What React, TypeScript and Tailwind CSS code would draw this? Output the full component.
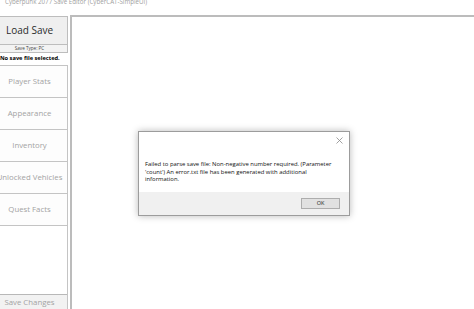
const navItems = ["Player Stats", "Appearance", "Inventory", "Unlocked Vehicles", "Quest Facts"];

const ErrorDialog = () => {
  return (
    <div className="absolute left-[138px] top-[131px] w-[212px] h-[85px] flex flex-col bg-white border border-[#9c9c9c] shadow-[0_0_7px_rgba(0,0,0,0.28)]">
      <div className="relative flex-1 pl-[6px] pr-[8px] pt-[29px]">
        <button className="absolute right-[6px] top-[5px] text-[#8a8a8a]">
          <svg width="7" height="7" viewBox="0 0 7 7" fill="none" stroke="currentColor" strokeWidth="0.8">
            <path d="M0.5 0.5 L6.5 6.5 M6.5 0.5 L0.5 6.5" />
          </svg>
        </button>
        <p className="text-[5.9px] leading-[7.6px] text-[#111]">
          Failed to parse save file: Non-negative number required. (Parameter 'count') An error.txt file has been generated
          with additional information.
        </p>
      </div>
      <div className="h-[23px] bg-[#f0f0f0] flex items-center justify-end pr-[9px]">
        <button className="w-[39px] h-[11px] bg-[#e1e1e1] border border-[#adadad] text-[5.5px] leading-none text-[#222]">
          OK
        </button>
      </div>
    </div>
  );
};

const App = () => {
  return (
    <div className="relative w-[474px] h-[309px] overflow-hidden bg-white font-['Open_Sans','Liberation_Sans',sans-serif] flex flex-col">
      {/* window title, cut off at the top */}
      <div className="h-[15px] shrink-0 pl-[5px]">
        <div className="-mt-[3px] text-[6.2px] leading-[9px] text-[#a0a0a0] whitespace-nowrap">
          Cyberpunk 2077 Save Editor (CyberCAT-SimpleUI)
        </div>
      </div>

      <div className="flex flex-1 min-h-0">
        {/* left column */}
        <div className="-ml-[9px] w-[77px] shrink-0 flex flex-col">
          <div className="h-[29px] mt-[1px] bg-[#efefef] border border-[#bdbdbd] flex items-center justify-center text-[10px] text-[#2b2b2b]">
            Load Save
          </div>
          <div className="h-[8px] bg-[#f3f3f3] border-x border-b border-[#bdbdbd] flex items-center justify-center text-[4.6px] leading-none text-[#444]">
            Save Type: PC
          </div>
          <div className="h-[12px] pl-[9px] flex items-center text-[5.7px] font-bold leading-none text-black whitespace-nowrap">
            No save file selected.
          </div>
          <div className="flex-1 flex flex-col border-r border-[#c4c4c4]">
            {navItems.map((item) => (
              <div
                key={item}
                className="h-[32px] border-t border-l border-[#c4c4c4] bg-[#fdfdfd] flex items-center justify-center text-[7.8px] text-[#a3a3a3] whitespace-nowrap"
              >
                {item}
              </div>
            ))}
            <div className="flex-1 border-t border-l border-[#c4c4c4] bg-white" />
            <div className="h-[15px] border-t border-l border-[#b8b8b8] bg-[#f2f2f2] flex items-start justify-center pt-[4px] text-[7.8px] leading-none text-[#a3a3a3] whitespace-nowrap">
              Save Changes
            </div>
          </div>
        </div>

        {/* main area */}
        <div className="flex-1 ml-[2px] border-t-2 border-l-2 border-[#bcbcbc] bg-white" />
      </div>

      <ErrorDialog />
    </div>
  );
};

export default App;
